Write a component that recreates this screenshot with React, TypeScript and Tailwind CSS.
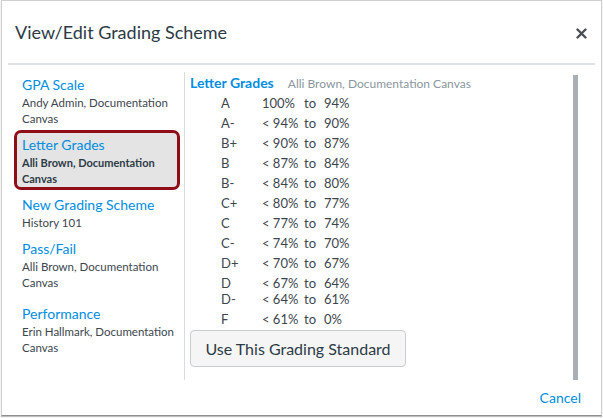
import React from 'react'

type Scheme = {
  title: string
  owner: string[]
  selected?: boolean
  extraTop?: boolean
}

const schemes: Scheme[] = [
  { title: 'GPA Scale', owner: ['Andy Admin, Documentation', 'Canvas'] },
  { title: 'Letter Grades', owner: ['Alli Brown, Documentation', 'Canvas'], selected: true },
  { title: 'New Grading Scheme', owner: ['History 101'] },
  { title: 'Pass/Fail', owner: ['Alli Brown, Documentation', 'Canvas'] },
  { title: 'Performance', owner: ['Erin Hallmark, Documentation', 'Canvas'], extraTop: true },
]

// D- sits tighter under D in the original
const grades = [
  { name: 'A', from: '100%', to: '94%' },
  { name: 'A-', from: '< 94%', to: '90%' },
  { name: 'B+', from: '< 90%', to: '87%' },
  { name: 'B', from: '< 87%', to: '84%' },
  { name: 'B-', from: '< 84%', to: '80%' },
  { name: 'C+', from: '< 80%', to: '77%' },
  { name: 'C', from: '< 77%', to: '74%' },
  { name: 'C-', from: '< 74%', to: '70%' },
  { name: 'D+', from: '< 70%', to: '67%' },
  { name: 'D', from: '< 67%', to: '64%' },
  { name: 'D-', from: '< 64%', to: '61%', tight: true },
  { name: 'F', from: '< 61%', to: '0%' },
]

const SchemeItem = ({ scheme }: { scheme: Scheme }) => (
  <div
    className={
      scheme.selected
        ? 'rounded-[7px] border-[3px] border-[#8f0d16] bg-[#e4e4e4] px-[5px] pt-[2px]'
        : scheme.extraTop
          ? 'mt-[5px] rounded-[7px] border-[3px] border-transparent px-[5px] pt-[2px]'
          : 'rounded-[7px] border-[3px] border-transparent px-[5px] pt-[2px]'
    }
  >
    <div className="text-[14px] leading-[20px] text-[#008ee2]">{scheme.title}</div>
    {scheme.owner.map((line) => (
      <div
        key={line}
        className={
          scheme.selected
            ? 'whitespace-nowrap text-[11px] font-bold leading-[16px] text-[#2d3b45]'
            : 'whitespace-nowrap text-[11.5px] leading-[16px] text-[#3d464d]'
        }
      >
        {line}
      </div>
    ))}
  </div>
)

export default function App() {
  return (
    <div className="h-[418px] w-[603px] bg-white pl-[1px] font-['Lato','Noto_Sans',sans-serif]">
      <div className="flex h-[416px] w-[601px] flex-col border border-[#cfcfcf] border-b-[#8f8f8f] bg-white shadow-[0_1px_1px_rgba(0,0,0,0.25)]">
        {/* header */}
        <div className="flex h-[62px] shrink-0 items-center justify-between pl-[13px] pr-[14px]">
          <h1 className="text-[18px] text-[#2d3b45]">View/Edit Grading Scheme</h1>
          <svg width="11" height="11" viewBox="0 0 11 11" className="mt-[2px]">
            <path d="M1.5 1.5 L9.5 9.5 M9.5 1.5 L1.5 9.5" stroke="#4a4f54" strokeWidth="2.4" strokeLinecap="round" />
          </svg>
        </div>
        <div className="mx-[6px] h-[2px] shrink-0 bg-[#dfe2e4]" />

        {/* body */}
        <div className="flex h-[315px] shrink-0 pt-[7px]">
          <div className="w-[183px] shrink-0 border-r border-[#d9dcde] pl-[12px] pr-[4px]">
            <div className="-mt-[2px]">
              {schemes.map((s) => (
                <SchemeItem key={s.title} scheme={s} />
              ))}
            </div>
          </div>

          <div className="flex flex-1">
            <div className="flex-1 pl-[5px] pt-[1px]">
              <div className="flex items-baseline gap-[14px] leading-[20px]">
                <span className="text-[14px] font-bold text-[#008ee2]">Letter Grades</span>
                <span className="text-[12px] text-[#8b969e]">Alli Brown, Documentation Canvas</span>
              </div>
              <div className="pl-[31px] text-[13px] text-[#3d464d]">
                {grades.map((g) => (
                  <div
                    key={g.name}
                    className={g.tight ? '-mt-[4px] flex h-[20px] items-center' : 'flex h-[20px] items-center'}
                  >
                    <span className="w-[41px] -mt-[1px]">{g.name}</span>
                    <span className="w-[42px]">{g.from}</span>
                    <span className="w-[20px]">to</span>
                    <span>{g.to}</span>
                  </div>
                ))}
              </div>
              <button className="h-[37px] w-[216px] rounded-[4px] border border-[#c7cdd1] bg-[#f5f5f5] text-[16px] text-[#2d3b45]">
                Use This Grading Standard
              </button>
            </div>
            <div className="mr-[23px] mt-[3px] w-[5px] bg-[#a9afb4]" />
          </div>
        </div>

        {/* footer */}
        <div className="flex flex-1 items-center justify-end pr-[20px]">
          <span className="text-[14px] text-[#008ee2]">Cancel</span>
        </div>
      </div>
    </div>
  )
}
